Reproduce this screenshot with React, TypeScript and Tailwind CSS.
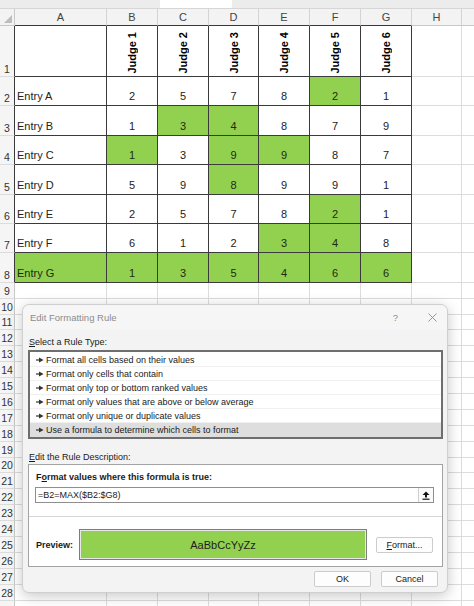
import React from 'react';

const COLS = [
  { name: 'A', w: 'w-[92px]' },
  { name: 'B', w: 'w-[51px]' },
  { name: 'C', w: 'w-[51px]' },
  { name: 'D', w: 'w-[50px]' },
  { name: 'E', w: 'w-[51px]' },
  { name: 'F', w: 'w-[51px]' },
  { name: 'G', w: 'w-[51px]' },
  { name: 'H', w: 'w-[50px]' },
  { name: '', w: 'w-[40px]' },
];

// label, scores B..G, green columns (0 = A)
const ENTRIES: [string, number[], number[]][] = [
  ['Entry A', [2, 5, 7, 8, 2, 1], [5]],
  ['Entry B', [1, 3, 4, 8, 7, 9], [2, 3]],
  ['Entry C', [1, 3, 9, 9, 8, 7], [1, 3, 4]],
  ['Entry D', [5, 9, 8, 9, 9, 1], [3]],
  ['Entry E', [2, 5, 7, 8, 2, 1], [5]],
  ['Entry F', [6, 1, 2, 3, 4, 8], [4, 5]],
  ['Entry G', [1, 3, 5, 4, 6, 6], [0, 1, 2, 3, 4, 5, 6]],
];

const RULES = [
  'Format all cells based on their values',
  'Format only cells that contain',
  'Format only top or bottom ranked values',
  'Format only values that are above or below average',
  'Format only unique or duplicate values',
  'Use a formula to determine which cells to format',
];

function RowHead({ n, h, inTable }: { n: number | null; h: string; inTable?: boolean }) {
  return (
    <div
      className={`${h} w-[15px] shrink-0 flex items-end justify-center pb-[1px] bg-[#f5f5f5] border-b border-[#dcdcdc] border-r text-[10.5px] leading-[12px] text-[#333] ${
        inTable ? 'border-r-[#3a3a3a]' : 'border-r-[#c8c8c8]'
      }`}
    >
      {n}
    </div>
  );
}

function Bullet() {
  return (
    <svg width="8" height="6" viewBox="0 0 8 6" className="shrink-0">
      <rect x="0" y="2.4" width="4" height="1.2" fill="#333" />
      <polygon points="3,0.6 7.6,3 3,5.4" fill="#333" />
    </svg>
  );
}

function Sheet() {
  const smallRows = Array.from({ length: 21 }, (_, i) => i + 9);
  return (
    <div className="flex flex-col">
      {/* ribbon edge */}
      <div className="h-[9px] flex bg-[#ececec] border-b border-[#d6d6d6]">
        <div className="w-[160px]" />
        <div className="w-[72px] bg-white" />
      </div>
      {/* column letters */}
      <div className="flex h-[17px]">
        <div className="w-[15px] shrink-0 bg-[#f3f3f3] border-r border-b border-[#c8c8c8] flex items-end justify-end p-[2px]">
          <svg width="8" height="8" viewBox="0 0 8 8">
            <polygon points="8,0 8,8 0,8" fill="#bdbdbd" />
          </svg>
        </div>
        {COLS.map((c, i) => (
          <div
            key={i}
            className={`${c.w} shrink-0 bg-[#f3f3f3] border-r border-[#d4d4d4] border-b flex items-center justify-center text-[11px] text-[#444] ${
              i < 7 ? 'border-b-[#3a3a3a]' : 'border-b-[#c8c8c8]'
            }`}
          >
            {c.name}
          </div>
        ))}
      </div>

      {/* row 1: judges */}
      <div className="flex">
        <RowHead n={1} h="h-[51px]" inTable />
        {COLS.map((c, i) => (
          <div
            key={i}
            className={`${c.w} h-[51px] shrink-0 border-r border-b flex items-end justify-center pb-[2px] ${
              i < 7 ? 'border-[#3a3a3a]' : 'border-[#dcdcdc]'
            }`}
          >
            {i >= 1 && i <= 6 && (
              <span className="[writing-mode:vertical-rl] rotate-180 font-bold text-[11px] leading-[12px] text-black">
                Judge {i}
              </span>
            )}
          </div>
        ))}
      </div>

      {/* entries */}
      {ENTRIES.map(([label, scores, green], r) => (
        <div key={label} className="flex">
          <RowHead n={r + 2} h="h-[29.4px]" inTable />
          {COLS.map((c, i) => {
            const inTable = i < 7;
            const isGreen = green.includes(i);
            return (
              <div
                key={i}
                className={`${c.w} h-[29.4px] shrink-0 border-r border-b flex items-end pb-[2px] text-[11px] leading-[13px] ${
                  inTable ? 'border-[#3a3a3a]' : 'border-[#dcdcdc]'
                } ${isGreen ? 'bg-[#92d050] text-[#1d2b12]' : 'text-[#222]'} ${
                  i === 0 ? 'justify-start pl-[2px]' : 'justify-center'
                }`}
              >
                {i === 0 ? label : i <= 6 ? scores[i - 1] : ''}
              </div>
            );
          })}
        </div>
      ))}

      {/* empty rows */}
      {smallRows.map((n) => (
        <div key={n} className="flex">
          <RowHead n={n < 29 ? n : null} h="h-[15.9px]" />
          {COLS.map((c, i) => (
            <div key={i} className={`${c.w} h-[15.9px] shrink-0 border-r border-b border-[#dcdcdc]`} />
          ))}
        </div>
      ))}
    </div>
  );
}

function Dialog() {
  return (
    <div className="absolute left-[22px] top-[304px] w-[426px] h-[289px] flex flex-col rounded-[7px] bg-[#f3f3f3] border border-[#cfcfcf] shadow-[0_3px_14px_rgba(0,0,0,0.22)] text-[9px] leading-[12px] text-[#1a1a1a]">
      {/* title bar */}
      <div className="h-[25px] flex items-center pl-[7px] pr-[10px] rounded-t-[7px] bg-[#f6f6f6]">
        <span className="flex-1 text-[9.5px] text-[#8c8c8c]">Edit Formatting Rule</span>
        <span className="text-[9.5px] text-[#8c8c8c] mr-[30px]">?</span>
        <svg width="9" height="9" viewBox="0 0 9 9">
          <path d="M0.5 0.5 L8.5 8.5 M8.5 0.5 L0.5 8.5" stroke="#8c8c8c" strokeWidth="0.9" />
        </svg>
      </div>

      <div className="flex flex-col pl-[5px] pr-[4px]">
        <div className="h-[20px] flex items-end pb-[2px] pl-[1px]">
          <span>
            <span className="underline">S</span>elect a Rule Type:
          </span>
        </div>

        <div className="h-[89px] border-2 border-[#6e6e6e] bg-white flex flex-col pt-[1px]">
          {RULES.map((rule, i) => (
            <div
              key={rule}
              className={`h-[14.2px] flex items-center gap-[2px] pl-[6px] border-b ${
                i === RULES.length - 1 ? 'bg-[#dedede] border-transparent' : 'border-[#f0f0f0]'
              }`}
            >
              <Bullet />
              <span>{rule}</span>
            </div>
          ))}
        </div>

        <div className="h-[25px] flex items-end pb-[1px] pl-[1px]">
          <span>
            <span className="underline">E</span>dit the Rule Description:
          </span>
        </div>

        <div className="h-[103px] border border-[#a3a3a3] bg-white flex flex-col">
          <div className="pt-[6px] pl-[7px] font-bold">
            F<span className="underline">o</span>rmat values where this formula is true:
          </div>
          <div className="mt-[4px] ml-[6px] mr-[8px] h-[16px] border border-[#8f8f8f] flex items-center">
            <span className="flex-1 pl-[2px]">=B2=MAX($B2:$G8)</span>
            <div className="w-[15px] h-[14px] border-l border-[#d0d0d0] bg-[#fafafa] flex items-center justify-center">
              <svg width="8" height="9" viewBox="0 0 8 9">
                <polygon points="4,0.5 7.5,4 5,4 5,6.5 3,6.5 3,4 0.5,4" fill="#111" />
                <rect x="0.5" y="7.6" width="7" height="1.2" fill="#111" />
              </svg>
            </div>
          </div>
          <div className="mt-[13px] border-t border-[#d6d6d6]" />
          <div className="mt-[12px] flex items-center pl-[7px]">
            <span className="w-[43px] font-bold">Preview:</span>
            <div className="w-[288px] h-[31px] border border-[#7d7d7d] p-[1px] bg-[#e8e8e8]">
              <div className="h-full bg-[#92d050] flex items-center justify-center text-[11px] text-[#1d1d1d]">
                AaBbCcYyZz
              </div>
            </div>
            <button className="ml-[9px] w-[57px] h-[16px] rounded-[2px] border border-[#cccccc] bg-[#fdfdfd] text-[9px] leading-[12px]">
              <span className="underline">F</span>ormat...
            </button>
          </div>
        </div>

        <div className="mt-[4px] flex justify-end gap-[10px] pr-[5px]">
          <button className="w-[57px] h-[16px] rounded-[2px] border border-[#cccccc] bg-[#fdfdfd] text-[9px] leading-[12px]">
            OK
          </button>
          <button className="w-[57px] h-[16px] rounded-[2px] border border-[#cccccc] bg-[#fdfdfd] text-[9px] leading-[12px]">
            Cancel
          </button>
        </div>
      </div>
    </div>
  );
}

export default function App() {
  return (
    <div className="relative w-[474px] h-[606px] overflow-hidden bg-white font-['Liberation_Sans',Arial,sans-serif]">
      <Sheet />
      <Dialog />
    </div>
  );
}
